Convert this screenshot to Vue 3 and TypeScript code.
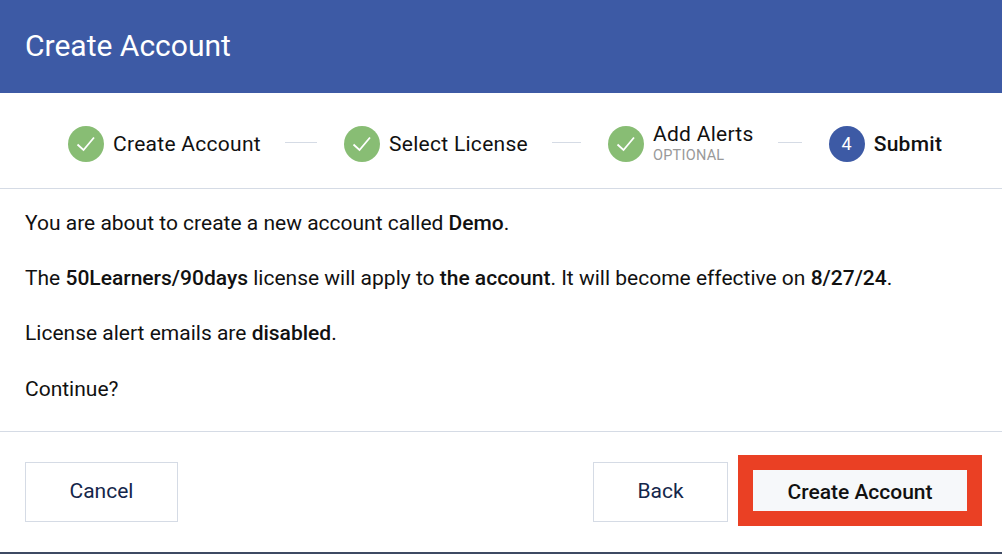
<script setup lang="ts">
interface Step {
  label: string;
  done: boolean;
  num?: number;
  sub?: string;
  bold?: boolean;
}
const steps: Step[] = [
  { label: 'Create Account', done: true },
  { label: 'Select License', done: true },
  { label: 'Add Alerts', done: true, sub: 'OPTIONAL' },
  { label: 'Submit', done: false, num: 4, bold: true },
];
</script>

<template>
  <div class="dialog">
    <header class="head">Create Account</header>
    <nav class="stepper">
      <template v-for="(s, i) in steps" :key="s.label">
        <div class="step">
          <span class="dot" :class="s.done ? 'done' : 'current'">
            <svg v-if="s.done" width="20" height="20" viewBox="0 0 20 20" fill="none">
              <path d="M1.5 10.5 L7.5 16 L18 3.5" stroke="#fff" stroke-width="1.8" />
            </svg>
            <template v-else>{{ s.num }}</template>
          </span>
          <span class="labels" :class="{ raised: s.sub }">
            <span class="label" :class="{ bold: s.bold }">{{ s.label }}</span>
            <span v-if="s.sub" class="sub">{{ s.sub }}</span>
          </span>
        </div>
        <span v-if="i < steps.length - 1" class="line" :class="`l${i}`"></span>
      </template>
    </nav>
    <main class="body">
      <p>You are about to create a new account called <b>Demo</b>.</p>
      <p>The <b>50Learners/90days</b> license will apply to <b>the account</b>. It will become effective on <b>8/27/24</b>.</p>
      <p>License alert emails are <b>disabled</b>.</p>
      <p>Continue?</p>
    </main>
    <footer class="foot">
      <button class="btn cancel">Cancel</button>
      <div class="right">
        <button class="btn back">Back</button>
        <div class="highlight">
          <button class="primary">Create Account</button>
        </div>
      </div>
    </footer>
  </div>
</template>

<style>
html, body { margin: 0; background: #fff; }
</style>

<style scoped>
.dialog {
  width: 1002px;
  height: 554px;
  box-sizing: border-box;
  display: flex;
  flex-direction: column;
  font-family: Roboto, "Liberation Sans", sans-serif;
  color: #111;
  border-bottom: 2px solid #3e4a63;
  background: #fff;
}
.head {
  height: 93px;
  flex: none;
  box-sizing: border-box;
  background: #3d5aa5;
  color: #fff;
  font-size: 30px;
  line-height: 92px;
  padding-left: 25px;
}
.stepper {
  height: 96px;
  flex: none;
  box-sizing: border-box;
  border-bottom: 1px solid #d5dbe5;
  display: flex;
  align-items: center;
  padding-left: 68px;
  padding-top: 6px;
}
.step { display: flex; align-items: center; }
.dot {
  width: 36px;
  height: 36px;
  border-radius: 50%;
  display: flex;
  align-items: center;
  justify-content: center;
  color: #fff;
  font-size: 18px;
  font-weight: 400;
  flex: none;
}
.dot.done { background: #88bd74; }
.dot.current { background: #3d5aa5; }
.labels { display: flex; flex-direction: column; margin-left: 9px; }
.labels.raised { margin-top: -3px; }
.label { font-size: 21px; line-height: 26px; letter-spacing: 0.28px; color: #111; }
.raised .label { margin-bottom: 1px; }
.label.bold { font-weight: 500; }
.sub { font-size: 14.5px; line-height: 16px; color: #999; letter-spacing: 0.25px; }
.line { height: 1px; background: #d5dbe5; flex: none; margin-top: -2px; }
.l0 { width: 32px; margin-left: 24px; margin-right: 27px; }
.l1 { width: 29px; margin-left: 24px; margin-right: 27px; }
.l2 { width: 24px; margin-left: 24px; margin-right: 27px; }
.body {
  flex: 1;
  box-sizing: border-box;
  padding: 19.8px 25px 0;
  border-bottom: 1px solid #d5dbe5;
  font-size: 21px;
  line-height: 28px;
}
.body p { margin: 0 0 27.3px; }
.body b { font-weight: 500; }
.foot {
  height: 120px;
  flex: none;
  box-sizing: border-box;
  display: flex;
  justify-content: space-between;
  align-items: flex-start;
  padding: 30px 20px 0 25px;
}
.right { display: flex; gap: 10px; align-items: flex-start; margin-top: -7px; }
.btn {
  height: 60px;
  box-sizing: border-box;
  background: #fff;
  border: 1px solid #d5dbe5;
  color: #14264a;
  font-family: inherit;
  font-size: 21px;
  padding: 0 0 2px;
}
.cancel { width: 153px; }
.back { width: 135px; margin-top: 7px; }
.highlight {
  width: 244px;
  height: 71px;
  box-sizing: border-box;
  background: #ea4024;
  padding: 15px;
}
.primary {
  display: block;
  width: 100%;
  height: 41px;
  border: none;
  padding: 2px 0 0;
  background: #f6f8fa;
  color: #111;
  font-family: inherit;
  font-size: 21px;
  font-weight: 500;
}
</style>
